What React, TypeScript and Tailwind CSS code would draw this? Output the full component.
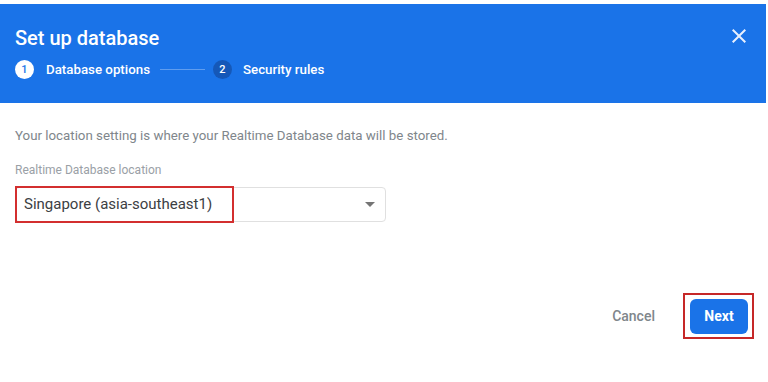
import React from 'react';

export default function App() {
  return (
    <div className="w-[768px] h-[382px] bg-white pt-[4px] font-['Roboto','Liberation_Sans',sans-serif]">
      {/* Header */}
      <div className="w-[766px] h-[99px] bg-[#1a73e8] px-[15px] pt-[22px] flex justify-between">
        <div>
          <h1 className="text-[20px] leading-[24px] font-medium text-white">Set up database</h1>
          <div className="mt-[10px] flex items-center">
            <span className="w-[19px] h-[19px] rounded-full bg-white text-[#1a73e8] text-[11px] font-medium flex items-center justify-center">1</span>
            <span className="ml-[12px] text-[13.3px] font-medium text-white">Database options</span>
            <span className="ml-[10px] w-[45px] h-px bg-white/30" />
            <span className="ml-[8px] w-[19px] h-[19px] rounded-full bg-[#1558b8] text-white text-[11px] font-medium flex items-center justify-center">2</span>
            <span className="ml-[11px] text-[13.3px] font-medium text-white">Security rules</span>
          </div>
        </div>
        <svg width="24" height="24" viewBox="0 0 24 24" className="mt-[-2px]">
          <path d="M19 6.41L17.59 5 12 10.59 6.41 5 5 6.41 10.59 12 5 17.59 6.41 19 12 13.41 17.59 19 19 17.59 13.41 12z" fill="#e8f0fe" />
        </svg>
      </div>

      {/* Body */}
      <div className="px-[15px]">
        <p className="mt-[25px] text-[13.3px] leading-[16px] text-[#80868b]">
          Your location setting is where your Realtime Database data will be stored.
        </p>
        <p className="mt-[19px] text-[12px] leading-[14px] text-[#9aa0a6]">Realtime Database location</p>
        <div className="mt-[10px] relative w-[371px] h-[35px] border border-[#e0e0e0] rounded-[4px] flex items-center justify-between pl-[8px] pr-[10px]">
          <span className="text-[15px] text-[#3c4043]">Singapore (asia-southeast1)</span>
          <svg width="10" height="5" viewBox="0 0 10 5">
            <path d="M0 0l5 5 5-5z" fill="#757575" />
          </svg>
          <div className="absolute left-[-1px] top-[-2px] w-[219px] h-[37px] border-2 border-[#d32f2f]" />
        </div>
      </div>

      {/* Footer */}
      <div className="mt-[77px] flex items-center justify-end pr-[20px]">
        <span className="text-[14px] font-medium text-[#80868b]">Cancel</span>
        <div className="ml-[35px] relative">
          <button className="w-[58px] h-[35px] rounded-[6px] bg-[#1a73e8] text-white text-[14px] font-bold">Next</button>
          <div className="absolute left-[-7px] top-[-6px] w-[71px] h-[46px] border-2 border-[#c62828]" />
        </div>
      </div>
    </div>
  );
}
